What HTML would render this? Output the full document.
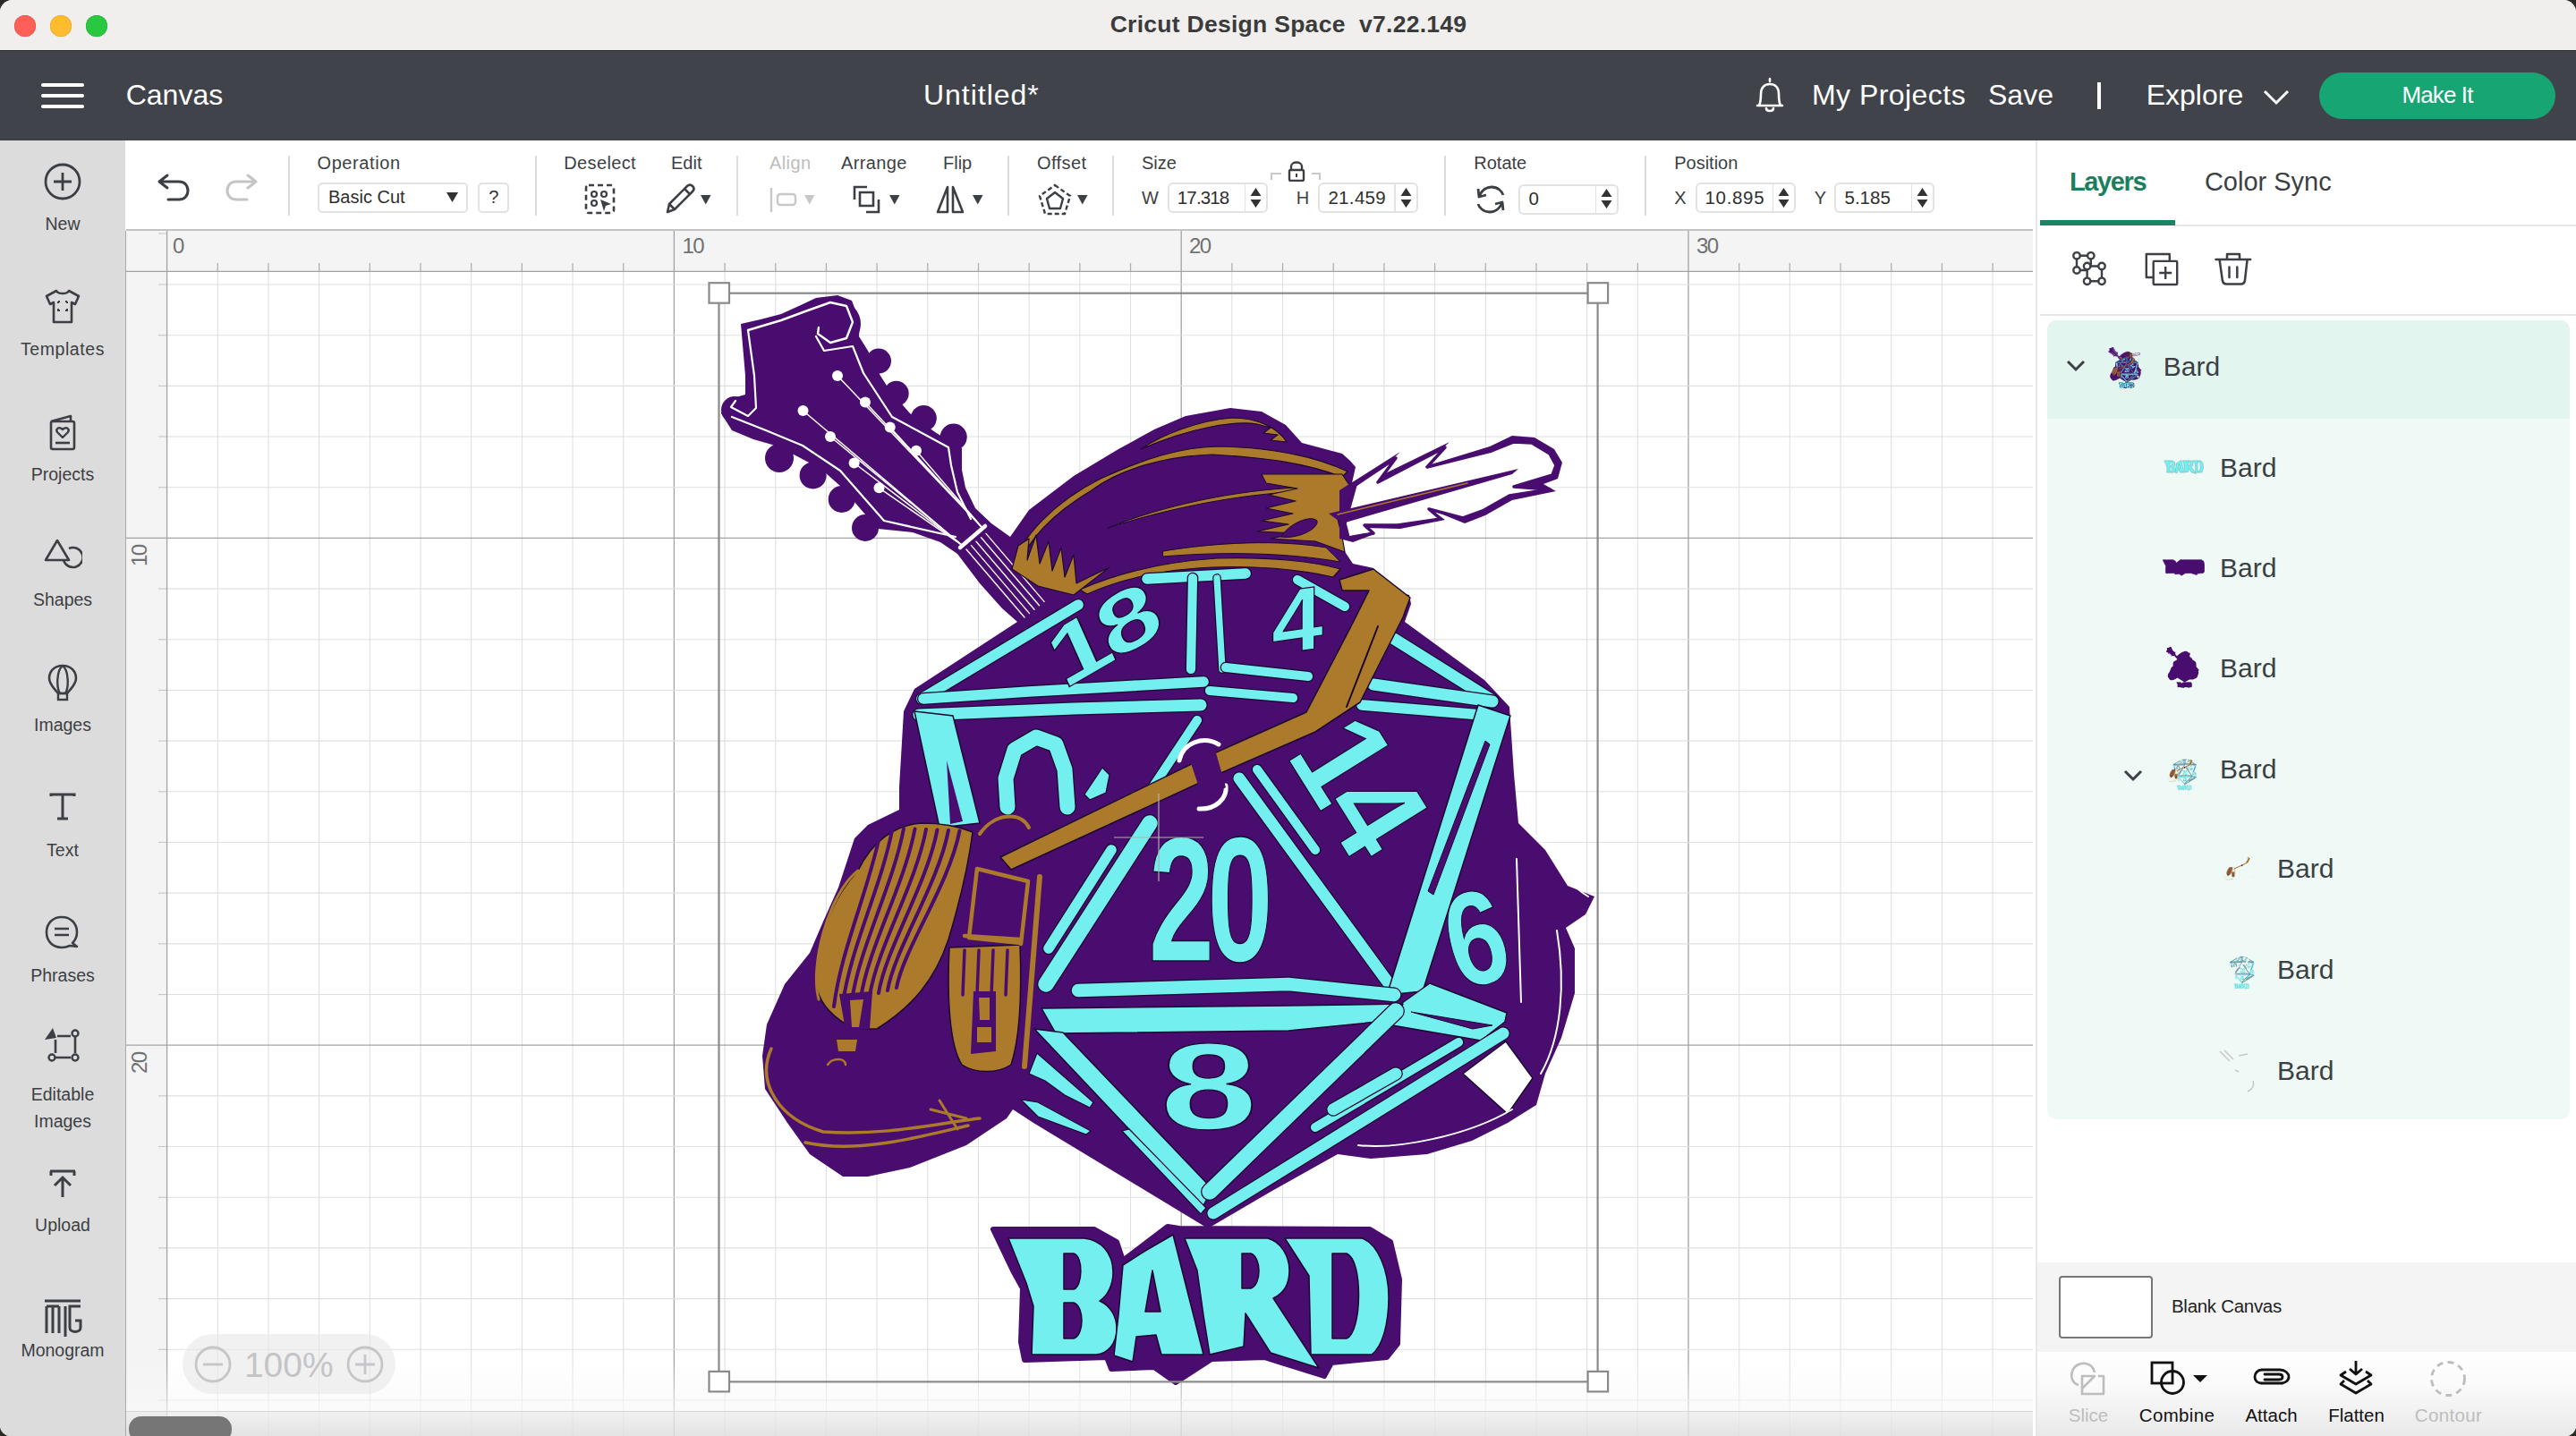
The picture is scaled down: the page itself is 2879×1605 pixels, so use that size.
<!DOCTYPE html>
<html><head><meta charset="utf-8"><style>
html,body{margin:0;padding:0;width:2879px;height:1605px;overflow:hidden;background:#2b2a26;}
.t{position:absolute;line-height:1;white-space:nowrap;font-family:'Liberation Sans', sans-serif;}
#win{position:absolute;left:0;top:0;width:2879px;height:1605px;border-radius:14px 14px 12px 12px;overflow:hidden;background:#fff;}
</style></head><body><div id="win">
<div style="position:absolute;left:0.0px;top:0.0px;width:2879.0px;height:57.0px;background:#f0efed;"></div><div style="position:absolute;left:0.0px;top:56.0px;width:2879.0px;height:1.0px;background:#2a2a2a;"></div><div style="position:absolute;left:16.0px;top:17.0px;width:24.0px;height:24.0px;background:#fe5f57;border-radius:50%;box-shadow:inset 0 0 0 0.5px #e14640;"></div><div style="position:absolute;left:56.0px;top:17.0px;width:24.0px;height:24.0px;background:#febc2e;border-radius:50%;box-shadow:inset 0 0 0 0.5px #dfa023;"></div><div style="position:absolute;left:96.0px;top:17.0px;width:24.0px;height:24.0px;background:#28c840;border-radius:50%;box-shadow:inset 0 0 0 0.5px #1aab29;"></div><div class="t" style="left:1440.0px;transform:translateX(-50%);top:14.3px;font-size:26.5px;color:#3b3b3b;font-weight:bold;letter-spacing:0.28px;">Cricut Design Space&nbsp;&nbsp;v7.22.149</div><div style="position:absolute;left:0.0px;top:57.0px;width:2879.0px;height:100.0px;background:#40434a;"></div><div style="position:absolute;left:46.0px;top:93.0px;width:48.0px;height:4.0px;background:#fff;border-radius:2px;"></div><div style="position:absolute;left:46.0px;top:105.0px;width:48.0px;height:4.0px;background:#fff;border-radius:2px;"></div><div style="position:absolute;left:46.0px;top:117.0px;width:48.0px;height:4.0px;background:#fff;border-radius:2px;"></div><div class="t" style="left:140.7px;top:89.7px;font-size:32px;color:#fff;font-weight:normal;letter-spacing:0px;">Canvas</div><div class="t" style="left:1032.0px;top:89.7px;font-size:32px;color:#fff;font-weight:normal;letter-spacing:0.97px;">Untitled*</div><svg style="position:absolute;left:1958.0px;top:86.0px;" width="40" height="42" viewBox="0 0 40 42"><path d="M20 5 L20 2 M8 32 C10 28 10 24 10 19 C10 12 14 8 20 8 C26 8 30 12 30 19 C30 24 30 28 32 32 Z M6 32 L34 32 M16 35 C16 39 24 39 24 35" fill="none" stroke="#fff" stroke-width="2.6" stroke-linejoin="round" stroke-linecap="round"/></svg><div class="t" style="left:2025.0px;top:89.6px;font-size:32px;color:#fff;font-weight:normal;letter-spacing:0.45px;">My Projects</div><div class="t" style="left:2222.0px;top:89.6px;font-size:32px;color:#fff;font-weight:normal;letter-spacing:0px;">Save</div><div style="position:absolute;left:2343.5px;top:92.0px;width:4.0px;height:29.5px;background:#fff;"></div><div class="t" style="left:2398.7px;top:89.6px;font-size:32px;color:#fff;font-weight:normal;letter-spacing:0px;">Explore</div><svg style="position:absolute;left:2528.0px;top:98.0px;" width="32" height="22" viewBox="0 0 32 22"><path d="M3 4 L16 17 L29 4" fill="none" stroke="#fff" stroke-width="3"/></svg><div style="position:absolute;left:2592.0px;top:81.0px;width:264.0px;height:52.3px;background:#17a673;border-radius:27px;"></div><div class="t" style="left:2724.0px;transform:translateX(-50%);top:93.2px;font-size:26px;color:#fff;font-weight:normal;letter-spacing:-0.9px;">Make It</div><div style="position:absolute;left:0.0px;top:157.0px;width:140.0px;height:1448.0px;background:#dcdcdc;"></div><div style="position:absolute;left:140.0px;top:258.0px;width:1.5px;height:1347.0px;background:#a9a9a9;"></div><svg style="position:absolute;left:48.0px;top:181.0px;" width="44" height="44" viewBox="0 0 44 44"><circle cx="22" cy="22" r="19" fill="none" stroke="#3c3f44" stroke-width="2.8"/><path d="M22 12 V32 M12 22 H32" stroke="#3c3f44" stroke-width="2.8"/></svg><div class="t" style="left:70.0px;transform:translateX(-50%);top:240.5px;font-size:19.5px;color:#3c3f44;font-weight:normal;letter-spacing:0px;">New</div><svg style="position:absolute;left:48.0px;top:321.0px;" width="44" height="44" viewBox="0 0 44 44"><path d="M15 4 C17 8 27 8 29 4 L40 10 L36 19 L32 17 L32 39 L12 39 L12 17 L8 19 L4 10 Z" fill="none" stroke="#3c3f44" stroke-width="2.6" stroke-linejoin="round"/><path d="M17 16 h2 M25 16 h2 M17 16 v2 M27 16 v2 M17 24 v2 h2 M27 24 v2 h-2" stroke="#3c3f44" stroke-width="2" fill="none"/></svg><div class="t" style="left:70.0px;transform:translateX(-50%);top:380.5px;font-size:19.5px;color:#3c3f44;font-weight:normal;letter-spacing:0.58px;">Templates</div><svg style="position:absolute;left:48.0px;top:461.0px;" width="44" height="44" viewBox="0 0 44 44"><path d="M9 10 L31 4 L31 10" fill="none" stroke="#3c3f44" stroke-width="2.6" stroke-linejoin="round"/><rect x="9" y="10" width="26" height="31" rx="2" fill="none" stroke="#3c3f44" stroke-width="2.6"/><path d="M22 28 L16 22 C14 19 17 15 22 19 C27 15 30 19 28 22 Z" fill="none" stroke="#3c3f44" stroke-width="2.4" stroke-linejoin="round"/><path d="M14 34 H30" stroke="#3c3f44" stroke-width="2.6"/></svg><div class="t" style="left:70.0px;transform:translateX(-50%);top:520.5px;font-size:19.5px;color:#3c3f44;font-weight:normal;letter-spacing:0px;">Projects</div><svg style="position:absolute;left:48.0px;top:601.0px;" width="44" height="44" viewBox="0 0 44 44"><path d="M16 3 L3 25 L29 25 Z" fill="none" stroke="#3c3f44" stroke-width="2.6" stroke-linejoin="round"/><path d="M23 25 A11 11 0 1 0 29 12" fill="none" stroke="#3c3f44" stroke-width="2.6"/><path d="M17 25 A11 11 0 0 0 39 30" fill="none" stroke="#3c3f44" stroke-width="0"/></svg><div class="t" style="left:70.0px;transform:translateX(-50%);top:660.5px;font-size:19.5px;color:#3c3f44;font-weight:normal;letter-spacing:0px;">Shapes</div><svg style="position:absolute;left:48.0px;top:741.0px;" width="44" height="44" viewBox="0 0 44 44"><path d="M22 3 C12 3 7 10 7 17 C7 24 13 29 17 34 L27 34 C31 29 37 24 37 17 C37 10 32 3 22 3 Z" fill="none" stroke="#3c3f44" stroke-width="2.6"/><path d="M22 3 C15 8 15 28 19 34 M22 3 C29 8 29 28 25 34" fill="none" stroke="#3c3f44" stroke-width="2.4"/><rect x="17" y="34" width="10" height="7" fill="none" stroke="#3c3f44" stroke-width="2.4"/></svg><div class="t" style="left:70.0px;transform:translateX(-50%);top:800.5px;font-size:19.5px;color:#3c3f44;font-weight:normal;letter-spacing:0px;">Images</div><svg style="position:absolute;left:48.0px;top:884.0px;" width="44" height="36" viewBox="0 0 44 36"><path d="M9 6 V4 H35 V6 M22 4 V31 M16 31 H28" fill="none" stroke="#3c3f44" stroke-width="3"/></svg><div class="t" style="left:70.0px;transform:translateX(-50%);top:940.5px;font-size:19.5px;color:#3c3f44;font-weight:normal;letter-spacing:0px;">Text</div><svg style="position:absolute;left:48.0px;top:1020.0px;" width="44" height="44" viewBox="0 0 44 44"><path d="M30 37 C26 39 24 39 21 39 C11 39 4 32 4 22 C4 12 11 5 21 5 C31 5 38 12 38 22 C38 28 36 31 33 34 L38 38 Z" fill="none" stroke="#3c3f44" stroke-width="2.6" stroke-linejoin="round"/><path d="M13 18 H29 M13 25 H29" stroke="#3c3f44" stroke-width="2.6"/></svg><div class="t" style="left:70.0px;transform:translateX(-50%);top:1080.5px;font-size:19.5px;color:#3c3f44;font-weight:normal;letter-spacing:0px;">Phrases</div><svg style="position:absolute;left:48.0px;top:1147.0px;" width="44" height="44" viewBox="0 0 44 44"><path d="M11 2 L2 15 L15 13 Z" fill="#3c3f44"/><path d="M14 15 L14 30 M13 35 L31 35 M36 11 L36 30 M16 11 L31 11" stroke="#3c3f44" stroke-width="2.6"/><circle cx="36" cy="8" r="3.5" fill="none" stroke="#3c3f44" stroke-width="2.4"/><circle cx="10" cy="35" r="3.5" fill="none" stroke="#3c3f44" stroke-width="2.4"/><circle cx="36" cy="35" r="3.5" fill="none" stroke="#3c3f44" stroke-width="2.4"/></svg><div class="t" style="left:70.0px;transform:translateX(-50%);top:1213.5px;font-size:19.5px;color:#3c3f44;font-weight:normal;letter-spacing:0px;">Editable</div><div class="t" style="left:70.0px;transform:translateX(-50%);top:1243.5px;font-size:19.5px;color:#3c3f44;font-weight:normal;letter-spacing:0px;">Images</div><svg style="position:absolute;left:48.0px;top:1305.0px;" width="44" height="36" viewBox="0 0 44 36"><path d="M8 4 H36 M9 4 V9 M35 4 V9 M22 33 V11 M13 20 L22 11 L31 20" fill="none" stroke="#3c3f44" stroke-width="3"/></svg><div class="t" style="left:70.0px;transform:translateX(-50%);top:1359.5px;font-size:19.5px;color:#3c3f44;font-weight:normal;letter-spacing:0px;">Upload</div><svg style="position:absolute;left:46.0px;top:1450.0px;" width="48" height="44" viewBox="0 0 48 44"><path d="M4 4 H44 M6 10 V40 M13 10 V40 M20 10 H6 M20 10 V40 M27 10 V44 M44 10 H32 V34 C32 40 44 40 44 34 V26 H38" fill="none" stroke="#3c3f44" stroke-width="3"/></svg><div class="t" style="left:70.0px;transform:translateX(-50%);top:1500.3px;font-size:19.5px;color:#3c3f44;font-weight:normal;letter-spacing:0px;">Monogram</div><div style="position:absolute;left:141.0px;top:157.0px;width:2134.0px;height:99.0px;background:#fff;"></div><div style="position:absolute;left:141.0px;top:255.5px;width:2131.0px;height:2.5px;background:#c4c4c4;"></div><svg style="position:absolute;left:172.0px;top:193.0px;" width="44" height="36" viewBox="0 0 44 36"><path d="M6 10 L15 3 M6 10 L15 17 M6 10 H28 C34 10 38 14 38 20 C38 26 34 30 28 30 H16" fill="none" stroke="#3c3f44" stroke-width="3" stroke-linecap="round" stroke-linejoin="round"/></svg><svg style="position:absolute;left:248.0px;top:193.0px;" width="44" height="36" viewBox="0 0 44 36"><path d="M38 10 L29 3 M38 10 L29 17 M38 10 H16 C10 10 6 14 6 20 C6 26 10 30 16 30 H28" fill="none" stroke="#c4c4c4" stroke-width="3" stroke-linecap="round" stroke-linejoin="round"/></svg><div style="position:absolute;left:321.5px;top:173.5px;width:2.0px;height:67.0px;background:#dcdcdc;"></div><div style="position:absolute;left:598.0px;top:173.5px;width:2.0px;height:67.0px;background:#dcdcdc;"></div><div style="position:absolute;left:823.0px;top:173.5px;width:2.0px;height:67.0px;background:#dcdcdc;"></div><div style="position:absolute;left:1126.0px;top:173.5px;width:2.0px;height:67.0px;background:#dcdcdc;"></div><div style="position:absolute;left:1242.5px;top:173.5px;width:2.0px;height:67.0px;background:#dcdcdc;"></div><div style="position:absolute;left:1614.0px;top:173.5px;width:2.0px;height:67.0px;background:#dcdcdc;"></div><div style="position:absolute;left:1837.6px;top:173.5px;width:2.0px;height:67.0px;background:#dcdcdc;"></div><div class="t" style="left:354.5px;top:172.1px;font-size:20px;color:#3c3f44;font-weight:normal;letter-spacing:0.59px;">Operation</div><div style="position:absolute;left:354.5px;top:203.6px;width:168.3px;height:34.4px;border:2px solid #e2e2e2;border-radius:5px;box-sizing:border-box;"></div><div class="t" style="left:367.0px;top:210.1px;font-size:20px;color:#2f2f2f;font-weight:normal;letter-spacing:0px;">Basic Cut</div><svg style="position:absolute;left:499.0px;top:215.0px;" width="14" height="12" viewBox="0 0 14 12"><path d="M0 0 H13 L6.5 11 Z" fill="#333"/></svg><div style="position:absolute;left:534.4px;top:203.6px;width:34.6px;height:34.4px;border:2px solid #e2e2e2;border-radius:5px;box-sizing:border-box;"></div><div class="t" style="left:551.7px;transform:translateX(-50%);top:210.1px;font-size:20px;color:#333;font-weight:normal;letter-spacing:0px;">?</div><div class="t" style="left:630.3px;top:172.1px;font-size:20px;color:#3c3f44;font-weight:normal;letter-spacing:0.36px;">Deselect</div><svg style="position:absolute;left:652.0px;top:204.0px;" width="38" height="38" viewBox="0 0 38 38"><rect x="3" y="3" width="31" height="31" rx="3" fill="none" stroke="#3c3f44" stroke-width="2.6" stroke-dasharray="6 4"/><circle cx="12" cy="13" r="3" fill="none" stroke="#3c3f44" stroke-width="2.2"/><circle cx="23" cy="13" r="3" fill="none" stroke="#3c3f44" stroke-width="2.2"/><circle cx="12" cy="23" r="3" fill="none" stroke="#3c3f44" stroke-width="2.2"/><path d="M19 19 L31 24 L25 26 L23 32 Z" fill="#3c3f44"/></svg><div class="t" style="left:750.0px;top:172.1px;font-size:20px;color:#3c3f44;font-weight:normal;letter-spacing:0px;">Edit</div><svg style="position:absolute;left:741.0px;top:205.0px;" width="38" height="36" viewBox="0 0 38 36"><path d="M5 32 L7 23 L27 3 C29 1 31 1 33 3 C35 5 35 7 33 9 L13 29 Z M7 23 L13 29 M24 6 L30 12" fill="none" stroke="#3c3f44" stroke-width="2.6" stroke-linejoin="round"/></svg><svg style="position:absolute;left:783.4px;top:217.6px;" width="12" height="11" viewBox="0 0 12 11"><path d="M0 0 H11.5 L5.75 10.5 Z" fill="#3c3f44"/></svg><div class="t" style="left:860.0px;top:172.1px;font-size:20px;color:#bdbdbd;font-weight:normal;letter-spacing:0.42px;">Align</div><svg style="position:absolute;left:859.0px;top:207.0px;" width="34" height="32" viewBox="0 0 34 32"><path d="M3 3 V30" stroke="#c8c8c8" stroke-width="2.4"/><rect x="10" y="10" width="20" height="12" rx="3" fill="none" stroke="#c8c8c8" stroke-width="2.4"/></svg><svg style="position:absolute;left:899.0px;top:218.0px;" width="12" height="11" viewBox="0 0 12 11"><path d="M0 0 H11.5 L5.75 10.5 Z" fill="#c8c8c8"/></svg><div class="t" style="left:940.0px;top:172.1px;font-size:20px;color:#3c3f44;font-weight:normal;letter-spacing:0.37px;">Arrange</div><svg style="position:absolute;left:952.0px;top:206.0px;" width="34" height="34" viewBox="0 0 34 34"><path d="M3 17 V3 H17 M9 9 H24 V24 H9 Z M30 17 V31 H16" fill="none" stroke="#3c3f44" stroke-width="2.6"/></svg><svg style="position:absolute;left:993.6px;top:218.0px;" width="12" height="11" viewBox="0 0 12 11"><path d="M0 0 H11.5 L5.75 10.5 Z" fill="#3c3f44"/></svg><div class="t" style="left:1054.0px;top:172.1px;font-size:20px;color:#3c3f44;font-weight:normal;letter-spacing:0px;">Flip</div><svg style="position:absolute;left:1045.0px;top:206.0px;" width="34" height="34" viewBox="0 0 34 34"><path d="M14 3 L3 31 H14 Z M20 3 L31 31 H20 Z" fill="none" stroke="#3c3f44" stroke-width="2.6" stroke-linejoin="round"/></svg><svg style="position:absolute;left:1086.5px;top:218.0px;" width="12" height="11" viewBox="0 0 12 11"><path d="M0 0 H11.5 L5.75 10.5 Z" fill="#3c3f44"/></svg><div class="t" style="left:1159.0px;top:172.1px;font-size:20px;color:#3c3f44;font-weight:normal;letter-spacing:0.4px;">Offset</div><svg style="position:absolute;left:1160.0px;top:205.0px;" width="38" height="38" viewBox="0 0 38 38"><path d="M19 2 L36 14 L30 34 L8 34 L2 14 Z" fill="none" stroke="#3c3f44" stroke-width="2.4" stroke-dasharray="5 3"/><path d="M19 10 L28 17 L25 28 L13 28 L10 17 Z" fill="none" stroke="#3c3f44" stroke-width="2.4" stroke-linejoin="round"/></svg><svg style="position:absolute;left:1203.6px;top:218.0px;" width="12" height="11" viewBox="0 0 12 11"><path d="M0 0 H11.5 L5.75 10.5 Z" fill="#3c3f44"/></svg><div class="t" style="left:1275.9px;top:172.1px;font-size:20px;color:#3c3f44;font-weight:normal;letter-spacing:0px;">Size</div><div class="t" style="left:1276.0px;top:211.0px;font-size:20px;color:#3c3f44;font-weight:normal;letter-spacing:0px;">W</div><div style="position:absolute;left:1304.7px;top:203.6px;width:112.5px;height:34.5px;border:2px solid #e2e2e2;border-radius:6px;box-sizing:border-box;"></div><div style="position:absolute;left:1390.5px;top:205.0px;width:1.5px;height:32.0px;background:#e2e2e2;"></div><svg style="position:absolute;left:1396.8px;top:209.0px;" width="14" height="24" viewBox="0 0 14 24"><path d="M0.5 10 L6.5 1 L12.5 10 Z M0.5 14 L12.5 14 L6.5 23 Z" fill="#333"/></svg><div class="t" style="left:1315.8px;top:210.5px;font-size:20.5px;color:#2f2f2f;font-weight:normal;letter-spacing:-0.85px;">17.318</div><svg style="position:absolute;left:1419.0px;top:178.0px;" width="58" height="25" viewBox="0 0 58 25"><path d="M2 23 V16 H13 M47 16 H56 V23" fill="none" stroke="#c8c8c8" stroke-width="2"/><path d="M24 12 V8 C24 2 36 2 36 8 V12" fill="none" stroke="#3c3f44" stroke-width="2.4"/><rect x="22" y="12" width="16" height="12" rx="1.5" fill="none" stroke="#3c3f44" stroke-width="2.4"/><path d="M30 16 V20" stroke="#3c3f44" stroke-width="2"/></svg><div class="t" style="left:1448.8px;top:211.0px;font-size:20px;color:#3c3f44;font-weight:normal;letter-spacing:0px;">H</div><div style="position:absolute;left:1472.7px;top:203.6px;width:112.5px;height:34.5px;border:2px solid #e2e2e2;border-radius:6px;box-sizing:border-box;"></div><div style="position:absolute;left:1558.0px;top:205.0px;width:1.5px;height:32.0px;background:#e2e2e2;"></div><svg style="position:absolute;left:1564.6px;top:209.0px;" width="14" height="24" viewBox="0 0 14 24"><path d="M0.5 10 L6.5 1 L12.5 10 Z M0.5 14 L12.5 14 L6.5 23 Z" fill="#333"/></svg><div class="t" style="left:1484.4px;top:210.5px;font-size:20.5px;color:#2f2f2f;font-weight:normal;letter-spacing:0.33px;">21.459</div><div class="t" style="left:1647.3px;top:172.1px;font-size:20px;color:#3c3f44;font-weight:normal;letter-spacing:0px;">Rotate</div><svg style="position:absolute;left:1649.0px;top:206.0px;" width="34" height="34" viewBox="0 0 34 34"><path d="M4 14 C7 6 13 3 18 3 C25 3 30 8 31 12 M30 20 C27 28 21 31 16 31 C9 31 4 26 3 22" fill="none" stroke="#3c3f44" stroke-width="2.8"/><path d="M3 5 L4 14 L12 12 M31 29 L30 20 L22 22" fill="none" stroke="#3c3f44" stroke-width="2.8" stroke-linejoin="round"/></svg><div style="position:absolute;left:1696.9px;top:205.9px;width:112.4px;height:33.8px;border:2px solid #e2e2e2;border-radius:6px;box-sizing:border-box;"></div><div style="position:absolute;left:1782.7px;top:207.0px;width:1.5px;height:31.0px;background:#e2e2e2;"></div><svg style="position:absolute;left:1789.0px;top:210.0px;" width="14" height="24" viewBox="0 0 14 24"><path d="M0.5 10 L6.5 1 L12.5 10 Z M0.5 14 L12.5 14 L6.5 23 Z" fill="#333"/></svg><div class="t" style="left:1708.6px;top:212.1px;font-size:20.5px;color:#2f2f2f;font-weight:normal;letter-spacing:0px;">0</div><div class="t" style="left:1871.2px;top:172.1px;font-size:20px;color:#3c3f44;font-weight:normal;letter-spacing:0px;">Position</div><div class="t" style="left:1871.2px;top:211.0px;font-size:20px;color:#3c3f44;font-weight:normal;letter-spacing:0px;">X</div><div style="position:absolute;left:1895.0px;top:203.6px;width:112.3px;height:34.5px;border:2px solid #e2e2e2;border-radius:6px;box-sizing:border-box;"></div><div style="position:absolute;left:1980.7px;top:205.0px;width:1.5px;height:32.0px;background:#e2e2e2;"></div><svg style="position:absolute;left:1987.0px;top:209.0px;" width="14" height="24" viewBox="0 0 14 24"><path d="M0.5 10 L6.5 1 L12.5 10 Z M0.5 14 L12.5 14 L6.5 23 Z" fill="#333"/></svg><div class="t" style="left:1905.5px;top:210.5px;font-size:20.5px;color:#2f2f2f;font-weight:normal;letter-spacing:0.68px;">10.895</div><div class="t" style="left:2027.8px;top:211.0px;font-size:20px;color:#3c3f44;font-weight:normal;letter-spacing:0px;">Y</div><div style="position:absolute;left:2049.9px;top:203.6px;width:112.5px;height:34.5px;border:2px solid #e2e2e2;border-radius:6px;box-sizing:border-box;"></div><div style="position:absolute;left:2135.6px;top:205.0px;width:1.5px;height:32.0px;background:#e2e2e2;"></div><svg style="position:absolute;left:2142.0px;top:209.0px;" width="14" height="24" viewBox="0 0 14 24"><path d="M0.5 10 L6.5 1 L12.5 10 Z M0.5 14 L12.5 14 L6.5 23 Z" fill="#333"/></svg><div class="t" style="left:2061.5px;top:210.5px;font-size:20.5px;color:#2f2f2f;font-weight:normal;letter-spacing:0px;">5.185</div><div style="position:absolute;left:141.0px;top:258.0px;width:2131.0px;height:1347.0px;background:#fff;"></div><div style="position:absolute;left:141.0px;top:258.0px;width:2131.0px;height:45.0px;background:#f4f4f4;"></div><div style="position:absolute;left:141.0px;top:258.0px;width:45.0px;height:1347.0px;background:#f4f4f4;"></div><svg style="position:absolute;left:0;top:0" width="2879" height="1605"><line x1="243.28" y1="304" x2="243.28" y2="1605" stroke="#e0e0e0" stroke-width="1.1"/><line x1="243.28" y1="294" x2="243.28" y2="303" stroke="#b0b0b0" stroke-width="1.3"/><line x1="299.96" y1="304" x2="299.96" y2="1605" stroke="#e0e0e0" stroke-width="1.1"/><line x1="299.96" y1="294" x2="299.96" y2="303" stroke="#b0b0b0" stroke-width="1.3"/><line x1="356.64" y1="304" x2="356.64" y2="1605" stroke="#e0e0e0" stroke-width="1.1"/><line x1="356.64" y1="294" x2="356.64" y2="303" stroke="#b0b0b0" stroke-width="1.3"/><line x1="413.32" y1="304" x2="413.32" y2="1605" stroke="#e0e0e0" stroke-width="1.1"/><line x1="413.32" y1="294" x2="413.32" y2="303" stroke="#b0b0b0" stroke-width="1.3"/><line x1="470.00" y1="304" x2="470.00" y2="1605" stroke="#e0e0e0" stroke-width="1.1"/><line x1="470.00" y1="294" x2="470.00" y2="303" stroke="#b0b0b0" stroke-width="1.3"/><line x1="526.68" y1="304" x2="526.68" y2="1605" stroke="#e0e0e0" stroke-width="1.1"/><line x1="526.68" y1="294" x2="526.68" y2="303" stroke="#b0b0b0" stroke-width="1.3"/><line x1="583.36" y1="304" x2="583.36" y2="1605" stroke="#e0e0e0" stroke-width="1.1"/><line x1="583.36" y1="294" x2="583.36" y2="303" stroke="#b0b0b0" stroke-width="1.3"/><line x1="640.04" y1="304" x2="640.04" y2="1605" stroke="#e0e0e0" stroke-width="1.1"/><line x1="640.04" y1="294" x2="640.04" y2="303" stroke="#b0b0b0" stroke-width="1.3"/><line x1="696.72" y1="304" x2="696.72" y2="1605" stroke="#e0e0e0" stroke-width="1.1"/><line x1="696.72" y1="294" x2="696.72" y2="303" stroke="#b0b0b0" stroke-width="1.3"/><line x1="753.40" y1="258" x2="753.40" y2="1605" stroke="#a3a3a3" stroke-width="1.3"/><line x1="810.08" y1="304" x2="810.08" y2="1605" stroke="#e0e0e0" stroke-width="1.1"/><line x1="810.08" y1="294" x2="810.08" y2="303" stroke="#b0b0b0" stroke-width="1.3"/><line x1="866.76" y1="304" x2="866.76" y2="1605" stroke="#e0e0e0" stroke-width="1.1"/><line x1="866.76" y1="294" x2="866.76" y2="303" stroke="#b0b0b0" stroke-width="1.3"/><line x1="923.44" y1="304" x2="923.44" y2="1605" stroke="#e0e0e0" stroke-width="1.1"/><line x1="923.44" y1="294" x2="923.44" y2="303" stroke="#b0b0b0" stroke-width="1.3"/><line x1="980.12" y1="304" x2="980.12" y2="1605" stroke="#e0e0e0" stroke-width="1.1"/><line x1="980.12" y1="294" x2="980.12" y2="303" stroke="#b0b0b0" stroke-width="1.3"/><line x1="1036.80" y1="304" x2="1036.80" y2="1605" stroke="#e0e0e0" stroke-width="1.1"/><line x1="1036.80" y1="294" x2="1036.80" y2="303" stroke="#b0b0b0" stroke-width="1.3"/><line x1="1093.48" y1="304" x2="1093.48" y2="1605" stroke="#e0e0e0" stroke-width="1.1"/><line x1="1093.48" y1="294" x2="1093.48" y2="303" stroke="#b0b0b0" stroke-width="1.3"/><line x1="1150.16" y1="304" x2="1150.16" y2="1605" stroke="#e0e0e0" stroke-width="1.1"/><line x1="1150.16" y1="294" x2="1150.16" y2="303" stroke="#b0b0b0" stroke-width="1.3"/><line x1="1206.84" y1="304" x2="1206.84" y2="1605" stroke="#e0e0e0" stroke-width="1.1"/><line x1="1206.84" y1="294" x2="1206.84" y2="303" stroke="#b0b0b0" stroke-width="1.3"/><line x1="1263.52" y1="304" x2="1263.52" y2="1605" stroke="#e0e0e0" stroke-width="1.1"/><line x1="1263.52" y1="294" x2="1263.52" y2="303" stroke="#b0b0b0" stroke-width="1.3"/><line x1="1320.20" y1="258" x2="1320.20" y2="1605" stroke="#a3a3a3" stroke-width="1.3"/><line x1="1376.88" y1="304" x2="1376.88" y2="1605" stroke="#e0e0e0" stroke-width="1.1"/><line x1="1376.88" y1="294" x2="1376.88" y2="303" stroke="#b0b0b0" stroke-width="1.3"/><line x1="1433.56" y1="304" x2="1433.56" y2="1605" stroke="#e0e0e0" stroke-width="1.1"/><line x1="1433.56" y1="294" x2="1433.56" y2="303" stroke="#b0b0b0" stroke-width="1.3"/><line x1="1490.24" y1="304" x2="1490.24" y2="1605" stroke="#e0e0e0" stroke-width="1.1"/><line x1="1490.24" y1="294" x2="1490.24" y2="303" stroke="#b0b0b0" stroke-width="1.3"/><line x1="1546.92" y1="304" x2="1546.92" y2="1605" stroke="#e0e0e0" stroke-width="1.1"/><line x1="1546.92" y1="294" x2="1546.92" y2="303" stroke="#b0b0b0" stroke-width="1.3"/><line x1="1603.60" y1="304" x2="1603.60" y2="1605" stroke="#e0e0e0" stroke-width="1.1"/><line x1="1603.60" y1="294" x2="1603.60" y2="303" stroke="#b0b0b0" stroke-width="1.3"/><line x1="1660.28" y1="304" x2="1660.28" y2="1605" stroke="#e0e0e0" stroke-width="1.1"/><line x1="1660.28" y1="294" x2="1660.28" y2="303" stroke="#b0b0b0" stroke-width="1.3"/><line x1="1716.96" y1="304" x2="1716.96" y2="1605" stroke="#e0e0e0" stroke-width="1.1"/><line x1="1716.96" y1="294" x2="1716.96" y2="303" stroke="#b0b0b0" stroke-width="1.3"/><line x1="1773.64" y1="304" x2="1773.64" y2="1605" stroke="#e0e0e0" stroke-width="1.1"/><line x1="1773.64" y1="294" x2="1773.64" y2="303" stroke="#b0b0b0" stroke-width="1.3"/><line x1="1830.32" y1="304" x2="1830.32" y2="1605" stroke="#e0e0e0" stroke-width="1.1"/><line x1="1830.32" y1="294" x2="1830.32" y2="303" stroke="#b0b0b0" stroke-width="1.3"/><line x1="1887.00" y1="258" x2="1887.00" y2="1605" stroke="#a3a3a3" stroke-width="1.3"/><line x1="1943.68" y1="304" x2="1943.68" y2="1605" stroke="#e0e0e0" stroke-width="1.1"/><line x1="1943.68" y1="294" x2="1943.68" y2="303" stroke="#b0b0b0" stroke-width="1.3"/><line x1="2000.36" y1="304" x2="2000.36" y2="1605" stroke="#e0e0e0" stroke-width="1.1"/><line x1="2000.36" y1="294" x2="2000.36" y2="303" stroke="#b0b0b0" stroke-width="1.3"/><line x1="2057.04" y1="304" x2="2057.04" y2="1605" stroke="#e0e0e0" stroke-width="1.1"/><line x1="2057.04" y1="294" x2="2057.04" y2="303" stroke="#b0b0b0" stroke-width="1.3"/><line x1="2113.72" y1="304" x2="2113.72" y2="1605" stroke="#e0e0e0" stroke-width="1.1"/><line x1="2113.72" y1="294" x2="2113.72" y2="303" stroke="#b0b0b0" stroke-width="1.3"/><line x1="2170.40" y1="304" x2="2170.40" y2="1605" stroke="#e0e0e0" stroke-width="1.1"/><line x1="2170.40" y1="294" x2="2170.40" y2="303" stroke="#b0b0b0" stroke-width="1.3"/><line x1="2227.08" y1="304" x2="2227.08" y2="1605" stroke="#e0e0e0" stroke-width="1.1"/><line x1="2227.08" y1="294" x2="2227.08" y2="303" stroke="#b0b0b0" stroke-width="1.3"/><line x1="187" y1="318.00" x2="2272" y2="318.00" stroke="#e0e0e0" stroke-width="1.1"/><line x1="177" y1="318.00" x2="186" y2="318.00" stroke="#c6c6c6" stroke-width="1.1"/><line x1="187" y1="374.68" x2="2272" y2="374.68" stroke="#e0e0e0" stroke-width="1.1"/><line x1="177" y1="374.68" x2="186" y2="374.68" stroke="#c6c6c6" stroke-width="1.1"/><line x1="187" y1="431.36" x2="2272" y2="431.36" stroke="#e0e0e0" stroke-width="1.1"/><line x1="177" y1="431.36" x2="186" y2="431.36" stroke="#c6c6c6" stroke-width="1.1"/><line x1="187" y1="488.04" x2="2272" y2="488.04" stroke="#e0e0e0" stroke-width="1.1"/><line x1="177" y1="488.04" x2="186" y2="488.04" stroke="#c6c6c6" stroke-width="1.1"/><line x1="187" y1="544.72" x2="2272" y2="544.72" stroke="#e0e0e0" stroke-width="1.1"/><line x1="177" y1="544.72" x2="186" y2="544.72" stroke="#c6c6c6" stroke-width="1.1"/><line x1="141" y1="601.40" x2="2272" y2="601.40" stroke="#a3a3a3" stroke-width="1.3"/><line x1="187" y1="658.08" x2="2272" y2="658.08" stroke="#e0e0e0" stroke-width="1.1"/><line x1="177" y1="658.08" x2="186" y2="658.08" stroke="#c6c6c6" stroke-width="1.1"/><line x1="187" y1="714.76" x2="2272" y2="714.76" stroke="#e0e0e0" stroke-width="1.1"/><line x1="177" y1="714.76" x2="186" y2="714.76" stroke="#c6c6c6" stroke-width="1.1"/><line x1="187" y1="771.44" x2="2272" y2="771.44" stroke="#e0e0e0" stroke-width="1.1"/><line x1="177" y1="771.44" x2="186" y2="771.44" stroke="#c6c6c6" stroke-width="1.1"/><line x1="187" y1="828.12" x2="2272" y2="828.12" stroke="#e0e0e0" stroke-width="1.1"/><line x1="177" y1="828.12" x2="186" y2="828.12" stroke="#c6c6c6" stroke-width="1.1"/><line x1="187" y1="884.80" x2="2272" y2="884.80" stroke="#e0e0e0" stroke-width="1.1"/><line x1="177" y1="884.80" x2="186" y2="884.80" stroke="#c6c6c6" stroke-width="1.1"/><line x1="187" y1="941.48" x2="2272" y2="941.48" stroke="#e0e0e0" stroke-width="1.1"/><line x1="177" y1="941.48" x2="186" y2="941.48" stroke="#c6c6c6" stroke-width="1.1"/><line x1="187" y1="998.16" x2="2272" y2="998.16" stroke="#e0e0e0" stroke-width="1.1"/><line x1="177" y1="998.16" x2="186" y2="998.16" stroke="#c6c6c6" stroke-width="1.1"/><line x1="187" y1="1054.84" x2="2272" y2="1054.84" stroke="#e0e0e0" stroke-width="1.1"/><line x1="177" y1="1054.84" x2="186" y2="1054.84" stroke="#c6c6c6" stroke-width="1.1"/><line x1="187" y1="1111.52" x2="2272" y2="1111.52" stroke="#e0e0e0" stroke-width="1.1"/><line x1="177" y1="1111.52" x2="186" y2="1111.52" stroke="#c6c6c6" stroke-width="1.1"/><line x1="141" y1="1168.20" x2="2272" y2="1168.20" stroke="#a3a3a3" stroke-width="1.3"/><line x1="187" y1="1224.88" x2="2272" y2="1224.88" stroke="#e0e0e0" stroke-width="1.1"/><line x1="177" y1="1224.88" x2="186" y2="1224.88" stroke="#c6c6c6" stroke-width="1.1"/><line x1="187" y1="1281.56" x2="2272" y2="1281.56" stroke="#e0e0e0" stroke-width="1.1"/><line x1="177" y1="1281.56" x2="186" y2="1281.56" stroke="#c6c6c6" stroke-width="1.1"/><line x1="187" y1="1338.24" x2="2272" y2="1338.24" stroke="#e0e0e0" stroke-width="1.1"/><line x1="177" y1="1338.24" x2="186" y2="1338.24" stroke="#c6c6c6" stroke-width="1.1"/><line x1="187" y1="1394.92" x2="2272" y2="1394.92" stroke="#e0e0e0" stroke-width="1.1"/><line x1="177" y1="1394.92" x2="186" y2="1394.92" stroke="#c6c6c6" stroke-width="1.1"/><line x1="187" y1="1451.60" x2="2272" y2="1451.60" stroke="#e0e0e0" stroke-width="1.1"/><line x1="177" y1="1451.60" x2="186" y2="1451.60" stroke="#c6c6c6" stroke-width="1.1"/><line x1="187" y1="1508.28" x2="2272" y2="1508.28" stroke="#e0e0e0" stroke-width="1.1"/><line x1="177" y1="1508.28" x2="186" y2="1508.28" stroke="#c6c6c6" stroke-width="1.1"/><line x1="187" y1="1564.96" x2="2272" y2="1564.96" stroke="#e0e0e0" stroke-width="1.1"/><line x1="177" y1="1564.96" x2="186" y2="1564.96" stroke="#c6c6c6" stroke-width="1.1"/><line x1="186.6" y1="258" x2="186.6" y2="1605" stroke="#a3a3a3" stroke-width="1.3"/><line x1="141" y1="303.4" x2="2272" y2="303.4" stroke="#a3a3a3" stroke-width="1.3"/><line x1="177" y1="261" x2="186" y2="261" stroke="#c6c6c6" stroke-width="1.1"/></svg><div class="t" style="left:193.0px;top:262.7px;font-size:24px;color:#717171;font-weight:normal;letter-spacing:0px;">0</div><div class="t" style="left:762.5px;top:262.7px;font-size:24px;color:#717171;font-weight:normal;letter-spacing:-1.6px;">10</div><div class="t" style="left:1329.0px;top:262.7px;font-size:24px;color:#717171;font-weight:normal;letter-spacing:-1.6px;">20</div><div class="t" style="left:1896.0px;top:262.7px;font-size:24px;color:#717171;font-weight:normal;letter-spacing:-1.6px;">30</div><div class="t" style="left:143.9px;top:633.4px;font-size:24px;color:#717171;letter-spacing:-1.6px;transform-origin:0 0;transform:rotate(-90deg);">10</div><div class="t" style="left:143.9px;top:1200.2px;font-size:24px;color:#717171;letter-spacing:-1.6px;transform-origin:0 0;transform:rotate(-90deg);">20</div><div style="position:absolute;left:2272.0px;top:157.0px;width:607.0px;height:1448.0px;background:#fff;"></div><div style="position:absolute;left:2275.0px;top:157.0px;width:2.0px;height:1448.0px;background:#e8e8e8;"></div><div class="t" style="left:2313.0px;top:188.8px;font-size:29px;color:#1b7f5e;font-weight:bold;letter-spacing:-1.4px;">Layers</div><div class="t" style="left:2463.9px;top:188.8px;font-size:29px;color:#3c3f44;font-weight:normal;letter-spacing:0px;">Color Sync</div><div style="position:absolute;left:2280.0px;top:245.7px;width:151.0px;height:5.9px;background:#1b8462;"></div><div style="position:absolute;left:2431.0px;top:250.6px;width:448.0px;height:2.0px;background:#e6e6e6;"></div><svg style="position:absolute;left:2314.0px;top:279.0px;" width="42" height="42" viewBox="0 0 42 42"><g fill="none" stroke="#3c3f44" stroke-width="2.4"><path d="M7,6.8 H22.8 V18.5 M7,6.8 V23 H18.6 M18.6,18.5 H35 V35.3 H18.6 Z"/></g><g fill="#fff" stroke="#3c3f44" stroke-width="2.4"><circle cx="7" cy="6.8" r="3.7"/><circle cx="22.8" cy="6.8" r="3.7"/><circle cx="7" cy="23" r="3.7"/><circle cx="18.6" cy="18.5" r="3.7"/><circle cx="35" cy="18.5" r="3.7"/><circle cx="18.6" cy="35.3" r="3.7"/><circle cx="35" cy="35.3" r="3.7"/></g></svg><svg style="position:absolute;left:2396.0px;top:281.0px;" width="40" height="40" viewBox="0 0 40 40"><g fill="none" stroke="#3c3f44" stroke-width="2.4" stroke-linejoin="round"><path d="M10.7,29 H2.8 V3 H28.8 V10.9"/><rect x="10.7" y="10.9" width="26.5" height="26.1" rx="1"/><path d="M24.2,17 V31 M17.2,24 H31.2"/></g></svg><svg style="position:absolute;left:2474.0px;top:281.0px;" width="44" height="40" viewBox="0 0 44 40"><g fill="none" stroke="#3c3f44" stroke-width="2.5" stroke-linecap="round" stroke-linejoin="round"><path d="M2.5,9 H41.2 M15,9 V3 H29 V9 M6.7,10 L9.8,32 Q10.4,36.5 14.5,36.5 L30.5,36.5 Q34.5,36.5 35,32 L37.5,10 M17.5,17.5 V29 M26.3,17.5 V29"/></g></svg><div style="position:absolute;left:2280.0px;top:351.0px;width:599.0px;height:2.0px;background:#e6e6e6;"></div><div style="position:absolute;left:2287.7px;top:357.5px;width:583.9px;height:893.7px;background:#effaf6;border-radius:10px;"></div><div style="position:absolute;left:2287.7px;top:357.5px;width:583.9px;height:110.7px;background:#e2f6ef;border-radius:10px 10px 0 0;"></div><svg style="position:absolute;left:2309.0px;top:402.0px;" width="22" height="14" viewBox="0 0 22 14"><path d="M2 2 L11 11 L20 2" fill="none" stroke="#3c3f44" stroke-width="3"/></svg><div class="t" style="left:2417.8px;top:395.2px;font-size:30px;color:#3c3f44;font-weight:normal;letter-spacing:0px;">Bard</div><div class="t" style="left:2481.0px;top:507.6px;font-size:30px;color:#3c3f44;font-weight:normal;letter-spacing:0px;">Bard</div><div class="t" style="left:2481.0px;top:619.6px;font-size:30px;color:#3c3f44;font-weight:normal;letter-spacing:0px;">Bard</div><div class="t" style="left:2481.0px;top:731.6px;font-size:30px;color:#3c3f44;font-weight:normal;letter-spacing:0px;">Bard</div><div class="t" style="left:2481.0px;top:845.4px;font-size:30px;color:#3c3f44;font-weight:normal;letter-spacing:0px;">Bard</div><div class="t" style="left:2545.0px;top:955.6px;font-size:30px;color:#3c3f44;font-weight:normal;letter-spacing:0px;">Bard</div><div class="t" style="left:2545.0px;top:1068.6px;font-size:30px;color:#3c3f44;font-weight:normal;letter-spacing:0px;">Bard</div><div class="t" style="left:2545.0px;top:1181.6px;font-size:30px;color:#3c3f44;font-weight:normal;letter-spacing:0px;">Bard</div><svg style="position:absolute;left:2373.0px;top:860.0px;" width="22" height="14" viewBox="0 0 22 14"><path d="M2 2 L11 11 L20 2" fill="none" stroke="#3c3f44" stroke-width="3"/></svg><div style="position:absolute;left:2277.0px;top:1410.5px;width:602.0px;height:100.0px;background:#f4f4f4;"></div><div style="position:absolute;left:2300.5px;top:1425.6px;width:105.1px;height:70.4px;background:#fff;border:2px solid #777;border-radius:4px;box-sizing:border-box;"></div><div class="t" style="left:2427.0px;top:1450.0px;font-size:20.5px;color:#222;font-weight:normal;letter-spacing:-0.3px;">Blank Canvas</div><div style="position:absolute;left:2277.0px;top:1510.5px;width:602.0px;height:94.5px;background:linear-gradient(#fff,#fafafa 40%,#e9e9e9);"></div><div class="t" style="left:2334.0px;transform:translateX(-50%);top:1572.1px;font-size:20.5px;color:#bdbdbd;font-weight:normal;letter-spacing:0px;">Slice</div><div class="t" style="left:2433.0px;transform:translateX(-50%);top:1572.1px;font-size:20.5px;color:#111;font-weight:normal;letter-spacing:0.35px;">Combine</div><div class="t" style="left:2538.5px;transform:translateX(-50%);top:1572.1px;font-size:20.5px;color:#111;font-weight:normal;letter-spacing:0px;">Attach</div><div class="t" style="left:2633.5px;transform:translateX(-50%);top:1572.1px;font-size:20.5px;color:#111;font-weight:normal;letter-spacing:0px;">Flatten</div><div class="t" style="left:2736.5px;transform:translateX(-50%);top:1572.1px;font-size:20.5px;color:#bdbdbd;font-weight:normal;letter-spacing:0.35px;">Contour</div><svg style="position:absolute;left:2313.0px;top:1521.0px;" width="42" height="40" viewBox="0 0 42 40"><g fill="none" stroke="#bdbdbd" stroke-width="2.6"><path d="M10 27 C3 25 1 18 3 12 C5 5 12 2 18 3 C24 4 27 9 28 13"/><path d="M14 17 H28 L14 31 Z M18 37 H38 V17 H32" stroke-linejoin="round"/><path d="M14 31 V37 H18"/></g></svg><svg style="position:absolute;left:2403.0px;top:1521.0px;" width="66" height="42" viewBox="0 0 66 42"><g fill="none" stroke="#111" stroke-width="2.8"><rect x="2" y="2" width="23" height="23"/><circle cx="25" cy="24" r="12.5"/></g><path d="M48 16 H64 L56 24 Z" fill="#111"/></svg><svg style="position:absolute;left:2517.0px;top:1527.0px;" width="44" height="26" viewBox="0 0 44 26"><path d="M34 19 H11 C5 19 3 15 3 12 C3 8 6 4 11 4 H31 C37 4 41 8 41 12 C41 16 37 19 32 19 M14 9 H30 C32 9 34 10 34 12 C34 14 32 15 30 15 H14" fill="none" stroke="#111" stroke-width="2.8" stroke-linecap="round"/></svg><svg style="position:absolute;left:2614.0px;top:1519.0px;" width="40" height="42" viewBox="0 0 40 42"><g fill="none" stroke="#111" stroke-width="2.8" stroke-linejoin="round"><path d="M19 2 V17 M12 11 L19 17 L26 11"/><path d="M8 14 L2 18 L19 28 L36 18 L30 14"/><path d="M6 24 L2 28 L19 38 L36 28 L32 24"/></g></svg><svg style="position:absolute;left:2715.0px;top:1520.0px;" width="44" height="44" viewBox="0 0 44 44"><circle cx="21" cy="21" r="18.5" fill="none" stroke="#bdbdbd" stroke-width="2.8" stroke-dasharray="7 5.3"/></svg><div style="position:absolute;left:141.0px;top:1520.0px;width:2131.0px;height:58.0px;background:linear-gradient(rgba(255,255,255,0),rgba(248,248,248,0.7));"></div><div style="position:absolute;left:141.0px;top:1577.0px;width:2131.0px;height:28.0px;background:linear-gradient(rgba(236,236,236,0.75),rgba(222,222,222,0.85));border-top:1.5px solid #d6d6d6;box-sizing:border-box;"></div><div style="position:absolute;left:144.0px;top:1582.7px;width:115.0px;height:29.3px;background:#767676;border-radius:14px;"></div><div style="position:absolute;left:204.0px;top:1491.0px;width:238.4px;height:67.4px;background:rgba(232,232,234,0.6);border-radius:34px;"></div><svg style="position:absolute;left:216.0px;top:1503.0px;" width="44" height="44" viewBox="0 0 44 44"><circle cx="22" cy="22" r="19" fill="none" stroke="#c6c6c8" stroke-width="2.8"/><path d="M11 22 H33" stroke="#c6c6c8" stroke-width="2.8"/></svg><div class="t" style="left:272.9px;top:1506.0px;font-size:39px;color:#c4c4c6;font-weight:normal;letter-spacing:0px;">100%</div><svg style="position:absolute;left:386.0px;top:1503.0px;" width="44" height="44" viewBox="0 0 44 44"><circle cx="22" cy="22" r="19" fill="none" stroke="#c6c6c8" stroke-width="2.8"/><path d="M11 22 H33 M22 11 V33" stroke="#c6c6c8" stroke-width="2.8"/></svg><svg style="position:absolute;left:0;top:0" width="2879" height="1605" viewBox="0 0 2879 1605"><defs><g id="art"><g id="a_sil"><polygon points="828,362 850,357 873,351 895,341 912,333 936,330 952,336 961,360 960,376 970,392 984,420 991,431 1010,454 1017,462 1045,483 1075,501 1075,525 1079,545 1090,568 1108,585 1129,600 1150,570 1200,532 1250,502 1290,480 1325,465 1375,456 1410,460 1437,475 1455,495 1500,507 1509,515 1515,522 1497,602 1500,612 1512,630 1535,635 1540,657 1575,665 1577,675 1570,695 1659,760 1687,790 1692,865 1697,920 1727,950 1752,990 1782,1002 1772,1022 1750,1037 1760,1060 1760,1110 1745,1160 1727,1200 1717,1235 1685,1255 1645,1275 1595,1290 1532,1295 1495,1290 1420,1332 1350,1373 1155,1255 1132,1240 1125,1250 1080,1280 1017,1305 970,1315 942,1315 905,1290 880,1255 855,1217 852,1180 857,1145 877,1100 905,1065 920,1030 937,992 955,937 970,922 1005,905 1005,880 1010,795 1022,770 1137,695 1120,680 1095,652 1070,619 1051,606 1020,595 981,591 967,575 955,561 939,543 923,529 906,518 889,509 863,497 842,491 818,481 806,462 812,447 833,441 833,420" fill="#490c6f" /><circle cx="982" cy="403.6" r="14" fill="#490c6f"/><circle cx="1001.7" cy="439.8" r="14" fill="#490c6f"/><circle cx="1032.3" cy="467.6" r="14.5" fill="#490c6f"/><circle cx="1065.7" cy="488.5" r="15" fill="#490c6f"/><circle cx="871" cy="512" r="16" fill="#490c6f"/><circle cx="908.6" cy="531.4" r="15" fill="#490c6f"/><circle cx="940.7" cy="558" r="15" fill="#490c6f"/><circle cx="967" cy="590" r="15" fill="#490c6f"/><circle cx="821" cy="458" r="15" fill="#490c6f"/><circle cx="936" cy="362" r="26" fill="#490c6f"/></g><g id="a_head"><path d="M836,369 L873,358 L900,348 L928,338 L946,342 L953,360 L946,378 L928,383 L914,373 L915,366" fill="none" stroke="#ffffff" stroke-width="2.4" stroke-linejoin="round" stroke-linecap="round" /><path d="M912,376 L921,392 L953,387 L965,417 L997,466 L1060,500 L1063,520 L1070,550 L1085,580" fill="none" stroke="#ffffff" stroke-width="2.2" stroke-linejoin="round" stroke-linecap="round" /><path d="M836,369 L843,420 L845,456 L836,465 L817,455 L822,448 M818,466 L856,481 L897,498 L939,526 L988,582 L1068,600" fill="none" stroke="#ffffff" stroke-width="2.2" stroke-linejoin="round" stroke-linecap="round" /><circle cx="936" cy="420" r="6" fill="#ffffff"/><circle cx="967" cy="449.5" r="6" fill="#ffffff"/><circle cx="994.7" cy="477.4" r="6" fill="#ffffff"/><circle cx="1024" cy="503.8" r="6" fill="#ffffff"/><circle cx="897.5" cy="459" r="6" fill="#ffffff"/><circle cx="928" cy="488" r="6" fill="#ffffff"/><circle cx="954.6" cy="517.5" r="6" fill="#ffffff"/><circle cx="982.5" cy="545.3" r="6" fill="#ffffff"/><path d="M936,420 L1098,590" fill="none" stroke="#ffffff" stroke-width="1.5" stroke-linejoin="round" stroke-linecap="round" /><path d="M967,449.5 L1098,590" fill="none" stroke="#ffffff" stroke-width="1.5" stroke-linejoin="round" stroke-linecap="round" /><path d="M994.7,477.4 L1098,590" fill="none" stroke="#ffffff" stroke-width="1.5" stroke-linejoin="round" stroke-linecap="round" /><path d="M1024,503.8 L1098,590" fill="none" stroke="#ffffff" stroke-width="1.5" stroke-linejoin="round" stroke-linecap="round" /><path d="M897.5,459 L1076,610" fill="none" stroke="#ffffff" stroke-width="1.5" stroke-linejoin="round" stroke-linecap="round" /><path d="M928,488 L1076,610" fill="none" stroke="#ffffff" stroke-width="1.5" stroke-linejoin="round" stroke-linecap="round" /><path d="M954.6,517.5 L1076,610" fill="none" stroke="#ffffff" stroke-width="1.5" stroke-linejoin="round" stroke-linecap="round" /><path d="M982.5,545.3 L1076,610" fill="none" stroke="#ffffff" stroke-width="1.5" stroke-linejoin="round" stroke-linecap="round" /><path d="M1073,612 L1101,588" fill="none" stroke="#ffffff" stroke-width="4.5" stroke-linejoin="round" stroke-linecap="round" /><path d="M1080.0,614.0 L1145.0,690.0" fill="none" stroke="#ffffff" stroke-width="1.4" stroke-linejoin="round" stroke-linecap="round" /><path d="M1085.5,609.6 L1150.5,685.6" fill="none" stroke="#ffffff" stroke-width="1.4" stroke-linejoin="round" stroke-linecap="round" /><path d="M1091.0,605.2 L1156.0,681.2" fill="none" stroke="#ffffff" stroke-width="1.4" stroke-linejoin="round" stroke-linecap="round" /><path d="M1096.5,600.8 L1161.5,676.8" fill="none" stroke="#ffffff" stroke-width="1.4" stroke-linejoin="round" stroke-linecap="round" /><path d="M1102.0,596.4 L1167.0,672.4" fill="none" stroke="#ffffff" stroke-width="1.4" stroke-linejoin="round" stroke-linecap="round" /></g><g id="a_hat"><path d="M1275,502 C1300,485 1340,470 1377,467 C1405,467 1428,478 1438,494 L1420,492 L1428,486 L1412,484 L1420,478 L1405,474 C1380,470 1330,478 1275,502 Z" fill="#ac7a2b" stroke="#1c0830" stroke-width="1.2" stroke-linejoin="round" stroke-linecap="round" /><path d="M1131,636 C1140,600 1180,560 1230,535 C1280,512 1320,500 1360,499 C1420,500 1470,510 1506,527 L1500,533 C1460,518 1420,512 1355,508 C1300,510 1250,525 1220,548 C1180,572 1150,600 1138,634 Z" fill="#ac7a2b" stroke="#1c0830" stroke-width="1.2" stroke-linejoin="round" stroke-linecap="round" /><path d="M1238,590 C1300,565 1380,548 1451,545 L1440,550 C1370,555 1300,570 1238,590 Z" fill="#ac7a2b" stroke="#1c0830" stroke-width="1" stroke-linejoin="round" stroke-linecap="round" /><path d="M1410,530 L1500,530 L1510,545 L1495,580 L1500,600 L1503,617 L1470,605 L1420,602 L1450,596 L1405,594 L1440,586 L1410,582 L1445,574 L1415,568 L1448,560 L1418,553 L1450,546 L1415,540 Z" fill="#ac7a2b" stroke="#1c0830" stroke-width="1.2" stroke-linejoin="round" stroke-linecap="round" /><path d="M1432,600 C1440,585 1465,575 1472,582 C1474,592 1448,603 1432,600 Z" fill="#490c6f" stroke="#1c0830" stroke-width="1" stroke-linejoin="round" stroke-linecap="round" /><path d="M1300,616 C1360,606 1430,603 1482,612 L1498,628 C1440,618 1370,616 1300,622 Z" fill="#ac7a2b" stroke="#1c0830" stroke-width="1" stroke-linejoin="round" stroke-linecap="round" /><path d="M1207,659 C1250,640 1300,628 1360,624 C1420,622 1470,628 1498,636 L1490,645 C1450,636 1400,632 1355,634 C1300,636 1250,648 1215,664 Z" fill="#ac7a2b" stroke="#1c0830" stroke-width="1.2" stroke-linejoin="round" stroke-linecap="round" /><path d="M1131,636 L1138,610 L1150,602 L1148,626 L1158,598 L1162,630 L1172,605 L1176,638 L1186,612 L1190,645 L1200,620 L1203,652 L1240,634 L1200,665 L1160,655 Z" fill="#ac7a2b" stroke="#1c0830" stroke-width="1.2" stroke-linejoin="round" stroke-linecap="round" /></g><g id="a_feather"><polygon points="1497,548 1565,505 1532,537 1620,494 1590,522 1665,499 1690,487 1715,489 1737,502 1746,517 1741,535 1725,541 1739,549 1690,559 1660,576 1637,585 1600,570 1615,581 1565,591 1524,590 1536,597 1512,606 1497,602" fill="#490c6f" /><polygon points="1515,542 1560,512 1540,539 1615,500 1595,522 1667,504 1692,494 1712,495 1732,507 1739,520 1735,531 1692,544 1732,547 1687,554 1657,571 1635,579 1597,569 1610,580 1562,587 1525,587 1535,596 1507,601 1503,585" fill="#ffffff" stroke="#490c6f" stroke-width="3.5" stroke-linejoin="round" /><path d="M1485,574 L1697,524 L1690,530 L1500,585 Z" fill="#490c6f" /><path d="M1495,575 L1640,540" fill="none" stroke="#ac7a2b" stroke-width="1.5" stroke-linejoin="round" stroke-linecap="round" /></g><g id="a_d20"><path d="M1282,647 L1392,641" fill="none" stroke="#1c0830" stroke-width="14.1" stroke-linecap="round" stroke-linejoin="round"/><path d="M1282,647 L1392,641" fill="none" stroke="#74efef" stroke-width="11.6" stroke-linecap="round" stroke-linejoin="round"/><path d="M1333,646 L1331,748" fill="none" stroke="#1c0830" stroke-width="12.65" stroke-linecap="round" stroke-linejoin="round"/><path d="M1333,646 L1331,748" fill="none" stroke="#74efef" stroke-width="10.15" stroke-linecap="round" stroke-linejoin="round"/><path d="M1360,646 L1366,748" fill="none" stroke="#1c0830" stroke-width="9.75" stroke-linecap="round" stroke-linejoin="round"/><path d="M1360,646 L1366,748" fill="none" stroke="#74efef" stroke-width="7.25" stroke-linecap="round" stroke-linejoin="round"/><path d="M1205,676 L1030,781" fill="none" stroke="#1c0830" stroke-width="14.1" stroke-linecap="round" stroke-linejoin="round"/><path d="M1205,676 L1030,781" fill="none" stroke="#74efef" stroke-width="11.6" stroke-linecap="round" stroke-linejoin="round"/><path d="M1450,648 L1503,678" fill="none" stroke="#1c0830" stroke-width="12.65" stroke-linecap="round" stroke-linejoin="round"/><path d="M1450,648 L1503,678" fill="none" stroke="#74efef" stroke-width="10.15" stroke-linecap="round" stroke-linejoin="round"/><path d="M1558,714 L1668,783" fill="none" stroke="#1c0830" stroke-width="15.549999999999999" stroke-linecap="round" stroke-linejoin="round"/><path d="M1558,714 L1668,783" fill="none" stroke="#74efef" stroke-width="13.049999999999999" stroke-linecap="round" stroke-linejoin="round"/><path d="M1032,781 L1150,773 L1345,762" fill="none" stroke="#1c0830" stroke-width="14.1" stroke-linecap="round" stroke-linejoin="round"/><path d="M1032,781 L1150,773 L1345,762" fill="none" stroke="#74efef" stroke-width="11.6" stroke-linecap="round" stroke-linejoin="round"/><path d="M1027,799 L1200,792 L1342,788" fill="none" stroke="#1c0830" stroke-width="15.549999999999999" stroke-linecap="round" stroke-linejoin="round"/><path d="M1027,799 L1200,792 L1342,788" fill="none" stroke="#74efef" stroke-width="13.049999999999999" stroke-linecap="round" stroke-linejoin="round"/><path d="M1370,746 L1462,756" fill="none" stroke="#1c0830" stroke-width="12.65" stroke-linecap="round" stroke-linejoin="round"/><path d="M1370,746 L1462,756" fill="none" stroke="#74efef" stroke-width="10.15" stroke-linecap="round" stroke-linejoin="round"/><path d="M1352,772 L1445,780" fill="none" stroke="#1c0830" stroke-width="12.65" stroke-linecap="round" stroke-linejoin="round"/><path d="M1352,772 L1445,780" fill="none" stroke="#74efef" stroke-width="10.15" stroke-linecap="round" stroke-linejoin="round"/><path d="M1535,765 L1668,784" fill="none" stroke="#1c0830" stroke-width="15.549999999999999" stroke-linecap="round" stroke-linejoin="round"/><path d="M1535,765 L1668,784" fill="none" stroke="#74efef" stroke-width="13.049999999999999" stroke-linecap="round" stroke-linejoin="round"/><path d="M1522,788 L1668,800" fill="none" stroke="#1c0830" stroke-width="14.1" stroke-linecap="round" stroke-linejoin="round"/><path d="M1522,788 L1668,800" fill="none" stroke="#74efef" stroke-width="11.6" stroke-linecap="round" stroke-linejoin="round"/><polygon points="1022,795 1065,800 1095,920 1050,925" fill="#74efef" stroke="#1c0830" stroke-width="1.5"/><polygon points="1058,850 1076,918 1062,921" fill="#490c6f"/><path d="M1338,805 L1285,885" fill="none" stroke="#1c0830" stroke-width="12.65" stroke-linecap="round" stroke-linejoin="round"/><path d="M1338,805 L1285,885" fill="none" stroke="#74efef" stroke-width="10.15" stroke-linecap="round" stroke-linejoin="round"/><path d="M1285,920 L1169,1100" fill="none" stroke="#1c0830" stroke-width="19.9" stroke-linecap="round" stroke-linejoin="round"/><path d="M1285,920 L1169,1100" fill="none" stroke="#74efef" stroke-width="17.4" stroke-linecap="round" stroke-linejoin="round"/><path d="M1242,950 L1172,1060" fill="none" stroke="#1c0830" stroke-width="14.1" stroke-linecap="round" stroke-linejoin="round"/><path d="M1242,950 L1172,1060" fill="none" stroke="#74efef" stroke-width="11.6" stroke-linecap="round" stroke-linejoin="round"/><path d="M1385,870 L1560,1110" fill="none" stroke="#1c0830" stroke-width="15.549999999999999" stroke-linecap="round" stroke-linejoin="round"/><path d="M1385,870 L1560,1110" fill="none" stroke="#74efef" stroke-width="13.049999999999999" stroke-linecap="round" stroke-linejoin="round"/><path d="M1405,860 L1470,950" fill="none" stroke="#1c0830" stroke-width="12.65" stroke-linecap="round" stroke-linejoin="round"/><path d="M1405,860 L1470,950" fill="none" stroke="#74efef" stroke-width="10.15" stroke-linecap="round" stroke-linejoin="round"/><polygon points="1652,788 1688,800 1672,850 1590,1108 1550,1112" fill="#74efef" stroke="#1c0830" stroke-width="1.5" stroke-linejoin="round"/><polygon points="1660,828 1665,832 1602,1000 1596,996" fill="#490c6f" stroke="#1c0830" stroke-width="1"/><polygon points="1560,1126 1598,1099 1684,1132 1682,1142 1655,1163 1556,1146" fill="#74efef" stroke="#1c0830" stroke-width="1.5" stroke-linejoin="round"/><polygon points="1577,1131 1668,1146 1646,1150" fill="#490c6f" stroke="#1c0830" stroke-width="1"/><path d="M1205,1107 L1440,1100 L1558,1112" fill="none" stroke="#1c0830" stroke-width="17.0" stroke-linecap="round" stroke-linejoin="round"/><path d="M1205,1107 L1440,1100 L1558,1112" fill="none" stroke="#74efef" stroke-width="14.5" stroke-linecap="round" stroke-linejoin="round"/><polygon points="1164,1127 1440,1124 1568,1122 1560,1140 1440,1152 1180,1155" fill="#74efef" stroke="#1c0830" stroke-width="1.5" stroke-linejoin="round"/><polygon points="1156,1150 1188,1154 1355,1329 1344,1349" fill="#74efef" stroke="#1c0830" stroke-width="1.5" stroke-linejoin="round"/><path d="M1560,1130 L1352,1332" fill="none" stroke="#1c0830" stroke-width="19.9" stroke-linecap="round" stroke-linejoin="round"/><path d="M1560,1130 L1352,1332" fill="none" stroke="#74efef" stroke-width="17.4" stroke-linecap="round" stroke-linejoin="round"/><polygon points="1254,1264 1262,1262 1348,1350 1342,1357" fill="#74efef" stroke="#1c0830" stroke-width="1.2"/><polygon points="1159,1177 1222,1232 1218,1238 1190,1224 1168,1208 1150,1200" fill="#74efef" stroke="#1c0830" stroke-width="1.2"/><polygon points="1141,1229 1160,1232 1219,1264 1214,1268 1160,1248" fill="#74efef" stroke="#1c0830" stroke-width="1.2"/><path d="M1680,1155 L1356,1356" fill="none" stroke="#1c0830" stroke-width="15.549999999999999" stroke-linecap="round" stroke-linejoin="round"/><path d="M1680,1155 L1356,1356" fill="none" stroke="#74efef" stroke-width="13.049999999999999" stroke-linecap="round" stroke-linejoin="round"/><path d="M1630,1165 L1470,1260" fill="none" stroke="#1c0830" stroke-width="12.65" stroke-linecap="round" stroke-linejoin="round"/><path d="M1630,1165 L1470,1260" fill="none" stroke="#74efef" stroke-width="10.15" stroke-linecap="round" stroke-linejoin="round"/><path d="M1560,1200 L1490,1240" fill="none" stroke="#1c0830" stroke-width="15.549999999999999" stroke-linecap="round" stroke-linejoin="round"/><path d="M1560,1200 L1490,1240" fill="none" stroke="#74efef" stroke-width="13.049999999999999" stroke-linecap="round" stroke-linejoin="round"/><text x="0" y="0" transform="translate(1243,740) rotate(-30) skewX(-6) scale(1.4,1)" font-size="92" fill="#74efef" stroke="#1c0830" stroke-width="1.2" style="font-family:'Liberation Sans',sans-serif;font-weight:bold;letter-spacing:-6px" text-anchor="middle">18</text><text x="0" y="0" transform="translate(1450,728) rotate(-8) skewX(-8) scale(1.05,1)" font-size="100" fill="#74efef" stroke="#1c0830" stroke-width="1.2" style="font-family:'Liberation Sans',sans-serif;font-weight:bold;letter-spacing:0px" text-anchor="middle">4</text><path d="M1126,902 L1124,870 L1134,838 L1158,824 L1180,832 L1190,860 L1193,902" fill="none" stroke="#1c0830" stroke-width="19.5" stroke-linecap="round" stroke-linejoin="round"/><path d="M1126,902 L1124,870 L1134,838 L1158,824 L1180,832 L1190,860 L1193,902" fill="none" stroke="#74efef" stroke-width="17" stroke-linecap="round" stroke-linejoin="round"/><polygon points="1212,888 1232,858 1240,866 1236,886 1218,894" fill="#74efef" stroke="#1c0830" stroke-width="1.2"/><text x="0" y="0" transform="translate(1473,902) rotate(58) skewX(0) scale(0.95,1)" font-size="150" fill="#74efef" stroke="#1c0830" stroke-width="1.2" style="font-family:'Liberation Sans',sans-serif;font-weight:bold;letter-spacing:-10px" text-anchor="middle">14</text><text x="0" y="0" transform="translate(1662,1099) rotate(-14) skewX(0) scale(0.8,1)" font-size="150" fill="#74efef" stroke="#1c0830" stroke-width="1.2" style="font-family:'Liberation Sans',sans-serif;font-weight:bold;letter-spacing:0px" text-anchor="middle">6</text><text x="0" y="0" transform="translate(1349,1074) rotate(0) skewX(0) scale(0.83,1.24)" font-size="160" fill="#74efef" stroke="#1c0830" stroke-width="1.2" style="font-family:'Liberation Sans',sans-serif;font-weight:bold;letter-spacing:-10px" text-anchor="middle">20</text><text x="0" y="0" transform="translate(1351,1262) rotate(0) skewX(0) scale(1.5,1.05)" font-size="130" fill="#74efef" stroke="#1c0830" stroke-width="1.2" style="font-family:'Liberation Sans',sans-serif;font-weight:bold;letter-spacing:0px" text-anchor="middle">8</text></g><g id="a_strap"><path d="M1497,648 L1535,636 L1576,668 L1568,690 L1520,785 L1470,818 L1360,866 L1130,972 L1118,958 L1350,845 L1460,796 L1510,700 L1530,660 L1500,660 Z" fill="#ac7a2b" stroke="#1c0830" stroke-width="1.5" stroke-linejoin="round" stroke-linecap="round" /><path d="M1540,700 L1505,790" fill="none" stroke="#1c0830" stroke-width="2" stroke-linejoin="round" stroke-linecap="round" /><path d="M1318,850 C1322,830 1345,822 1362,832" fill="none" stroke="#ffffff" stroke-width="5" stroke-linejoin="round" stroke-linecap="round" /><path d="M1340,904 C1358,905 1372,893 1370,878" fill="none" stroke="#ffffff" stroke-width="5" stroke-linejoin="round" stroke-linecap="round" /><polygon points="1330,850 1358,838 1370,880 1345,895" fill="#490c6f"/></g><g id="a_bag"><path d="M959,973 C975,940 1000,922 1030,920 C1055,920 1075,925 1087,930 C1082,970 1072,1010 1060,1050 C1045,1095 1020,1125 980,1150 L955,1150 C935,1140 918,1125 913,1105 C910,1060 925,1010 959,973 Z" fill="#ac7a2b" stroke="#1c0830" stroke-width="1.5" stroke-linejoin="round" stroke-linecap="round" /><path d="M985.0,925.0 C973.0,990 940,1060 932,1125" fill="none" stroke="#490c6f" stroke-width="4" stroke-linejoin="round" stroke-linecap="round" /><path d="M997.5,925.5 C985.5,990 950,1060 942,1122" fill="none" stroke="#490c6f" stroke-width="4" stroke-linejoin="round" stroke-linecap="round" /><path d="M1010.0,926.0 C998.0,990 960,1060 952,1119" fill="none" stroke="#490c6f" stroke-width="4" stroke-linejoin="round" stroke-linecap="round" /><path d="M1022.5,926.5 C1010.5,990 970,1060 962,1116" fill="none" stroke="#490c6f" stroke-width="4" stroke-linejoin="round" stroke-linecap="round" /><path d="M1035.0,927.0 C1023.0,990 980,1060 972,1113" fill="none" stroke="#490c6f" stroke-width="4" stroke-linejoin="round" stroke-linecap="round" /><path d="M1047.5,927.5 C1035.5,990 990,1060 982,1110" fill="none" stroke="#490c6f" stroke-width="4" stroke-linejoin="round" stroke-linecap="round" /><path d="M1060.0,928.0 C1048.0,990 1000,1060 992,1107" fill="none" stroke="#490c6f" stroke-width="4" stroke-linejoin="round" stroke-linecap="round" /><path d="M1072.5,928.5 C1060.5,990 1010,1060 1002,1104" fill="none" stroke="#490c6f" stroke-width="4" stroke-linejoin="round" stroke-linecap="round" /><path d="M938,1111 L975,1108 L972,1150 L945,1152 Z" fill="#490c6f" /><path d="M950,1118 L965,1117 L960,1148 L952,1148 Z" fill="#ac7a2b" /><path d="M935,1162 L958,1162 L956,1175 L937,1175 Z" fill="#ac7a2b" /><path d="M925,1190 C930,1182 945,1182 945,1190" fill="none" stroke="#ac7a2b" stroke-width="2.5" stroke-linejoin="round" stroke-linecap="round" /><path d="M915,1117 C905,1080 925,1000 959,973" fill="none" stroke="#ac7a2b" stroke-width="3" stroke-linejoin="round" stroke-linecap="round" /><path d="M1061,1059 L1140,1056 C1142,1110 1140,1160 1130,1190 C1115,1200 1090,1200 1075,1190 C1062,1170 1058,1120 1061,1059 Z" fill="#ac7a2b" stroke="#1c0830" stroke-width="1.5" stroke-linejoin="round" stroke-linecap="round" /><path d="M1078,1062 L1076,1112" fill="none" stroke="#490c6f" stroke-width="3.5" stroke-linejoin="round" stroke-linecap="round" /><path d="M1094,1062 L1092,1112" fill="none" stroke="#490c6f" stroke-width="3.5" stroke-linejoin="round" stroke-linecap="round" /><path d="M1110,1062 L1108,1112" fill="none" stroke="#490c6f" stroke-width="3.5" stroke-linejoin="round" stroke-linecap="round" /><path d="M1126,1062 L1124,1112" fill="none" stroke="#490c6f" stroke-width="3.5" stroke-linejoin="round" stroke-linecap="round" /><path d="M1088,1108 L1113,1108 L1113,1175 L1085,1178 Z" fill="#490c6f" /><path d="M1094,1115 L1106,1115 L1106,1140 L1095,1140 Z" fill="#ac7a2b" /><path d="M1092,1148 L1108,1148 L1108,1165 L1092,1165 Z" fill="#ac7a2b" /><path d="M1092,971 L1149,985 L1141,1055 M1092,971 L1083,1048 L1140,1054 M1078,1046 L1140,1050" fill="none" stroke="#ac7a2b" stroke-width="4.5" stroke-linejoin="round" stroke-linecap="round" /><path d="M1162,980 L1145,1192" fill="none" stroke="#ac7a2b" stroke-width="6" stroke-linejoin="round" stroke-linecap="round" /><path d="M1095,932 C1110,910 1140,905 1150,925" fill="none" stroke="#ac7a2b" stroke-width="4" stroke-linejoin="round" stroke-linecap="round" /><path d="M862,1172 C845,1210 870,1250 920,1265 C990,1270 1050,1255 1095,1250" fill="none" stroke="#ac7a2b" stroke-width="3.5" stroke-linejoin="round" stroke-linecap="round" /><path d="M900,1277 C960,1290 1030,1270 1082,1258" fill="none" stroke="#ac7a2b" stroke-width="3.5" stroke-linejoin="round" stroke-linecap="round" /><path d="M1050,1230 L1070,1262 M1040,1240 L1080,1250" fill="none" stroke="#ac7a2b" stroke-width="3" stroke-linejoin="round" stroke-linecap="round" /><polygon points="1635,1200 1683,1164 1713,1205 1685,1245" fill="#ffffff" stroke="#1c0830" stroke-width="1.5"/><path d="M1518,1280 C1560,1285 1640,1270 1690,1240" fill="none" stroke="#ffffff" stroke-width="2" stroke-linejoin="round" stroke-linecap="round" /><path d="M1700,918 C1730,940 1745,985 1775,1002" fill="none" stroke="#ffffff" stroke-width="2" stroke-linejoin="round" stroke-linecap="round" /><path d="M1740,1040 C1750,1100 1745,1160 1722,1200" fill="none" stroke="#ffffff" stroke-width="2" stroke-linejoin="round" stroke-linecap="round" /><path d="M1695,960 L1700,1120" fill="none" stroke="#ffffff" stroke-width="2" stroke-linejoin="round" stroke-linecap="round" /></g><g id="a_bardout"><polygon points="1110,1374 1223,1374 1248,1388 1255,1409 1305,1371 1318,1373 1531,1374 1554,1388 1564,1430 1562,1502 1550,1517 1488,1523 1480,1538 1413,1517 1354,1519 1314,1545 1290,1528 1242,1530 1237,1517 1145,1520 1141,1500 1143,1440 1132,1420" fill="#490c6f" stroke="#490c6f" stroke-width="6" stroke-linejoin="round" /></g><g id="a_bard"><path d="M1127,1384 L1212,1384 C1230,1386 1244,1400 1244,1422 C1244,1436 1238,1448 1229,1454 C1242,1460 1248,1472 1248,1485 C1248,1502 1238,1513 1225,1514 L1153,1514 L1155,1460 L1147,1434 Z M1189,1401 L1189,1441 L1200,1441 C1210,1438 1211,1404 1200,1401 Z M1189,1456 L1189,1496 L1200,1496 C1212,1492 1212,1460 1200,1456 Z" fill="#74efef" stroke="#1c0830" stroke-width="1.5" stroke-linejoin="round" stroke-linecap="round" fill-rule="evenodd"/><path d="M1311,1380 L1345,1514 L1298,1514 L1292,1492 L1270,1494 L1266,1522 L1245,1515 L1250,1470 L1255,1414 L1280,1398 Z M1297,1466 L1288,1420 L1280,1466 Z" fill="#74efef" stroke="#1c0830" stroke-width="1.5" stroke-linejoin="round" stroke-linecap="round" fill-rule="evenodd"/><path d="M1324,1384 L1417,1384 C1432,1388 1441,1404 1441,1420 C1441,1436 1434,1446 1423,1451 L1474,1529 L1420,1512 L1392,1468 L1390,1505 L1352,1514 L1345,1470 L1338,1420 Z M1388,1401 L1388,1440 L1398,1440 C1410,1436 1410,1405 1398,1401 Z" fill="#74efef" stroke="#1c0830" stroke-width="1.5" stroke-linejoin="round" stroke-linecap="round" fill-rule="evenodd"/><path d="M1436,1384 L1522,1384 C1540,1390 1552,1420 1552,1450 C1552,1480 1545,1505 1533,1514 L1465,1514 L1463,1426 Z M1489,1401 L1489,1496 L1505,1496 C1522,1490 1524,1408 1505,1401 Z" fill="#74efef" stroke="#1c0830" stroke-width="1.5" stroke-linejoin="round" stroke-linecap="round" fill-rule="evenodd"/></g></g></defs><use href="#art"/><rect x="803.5" y="327.7" width="982.1" height="1216.7" fill="none" stroke="#8a8a8a" stroke-width="2.2"/><rect x="792.5" y="316.2" width="22.5" height="22.5" fill="#fff" stroke="#8a8a8a" stroke-width="2.2"/><rect x="1774.6" y="316.2" width="22.5" height="22.5" fill="#fff" stroke="#8a8a8a" stroke-width="2.2"/><rect x="792.5" y="1532.9" width="22.5" height="22.5" fill="#fff" stroke="#8a8a8a" stroke-width="2.2"/><rect x="1774.6" y="1532.9" width="22.5" height="22.5" fill="#fff" stroke="#8a8a8a" stroke-width="2.2"/><path d="M1295,887 V985 M1245,936 H1345" stroke="#b0b0b0" stroke-width="1.2"/></svg><svg style="position:absolute;left:2356.0px;top:387.5px;overflow:hidden" width="38" height="46.10000000000002" viewBox="803.5 327.7 982.0999999999999 1216.7"><use href="#art"/></svg><svg style="position:absolute;left:2417.0px;top:513.0px;overflow:hidden" width="47" height="19" viewBox="1108 1372 458 174"><use href="#a_bard"/></svg><svg style="position:absolute;left:2417.0px;top:625.0px;overflow:hidden" width="47" height="19" viewBox="1108 1372 458 174"><use href="#a_bardout"/></svg><svg style="position:absolute;left:2417.0px;top:723.0px;overflow:hidden" width="45" height="46" viewBox="803.5 327.7 982.0999999999999 1216.7"><use href="#a_sil"/><use href="#a_bardout"/></svg><svg style="position:absolute;left:2417.0px;top:837.0px;overflow:hidden" width="45" height="47" viewBox="803.5 327.7 982.0999999999999 1216.7"><use href="#a_d20"/><use href="#a_strap"/><use href="#a_bag"/><use href="#a_bard"/></svg><svg style="position:absolute;left:2481.0px;top:946.0px;overflow:hidden" width="45" height="48" viewBox="803.5 327.7 982.0999999999999 1216.7"><use href="#a_strap"/><use href="#a_bag"/></svg><svg style="position:absolute;left:2481.0px;top:1057.0px;overflow:hidden" width="45" height="49" viewBox="803.5 327.7 982.0999999999999 1216.7"><use href="#a_d20"/><use href="#a_bard"/></svg><svg style="position:absolute;left:2478.0px;top:1172.0px;" width="50" height="50" viewBox="0 0 50 50"><g fill="none" stroke="#c9c9c9" stroke-width="1.6"><path d="M3 3 L14 14 M8 2 L18 12"/><path d="M24 8 L34 6"/><path d="M40 36 C42 42 38 46 34 48"/><path d="M20 24 L24 26"/></g></svg>
</div></body></html>
